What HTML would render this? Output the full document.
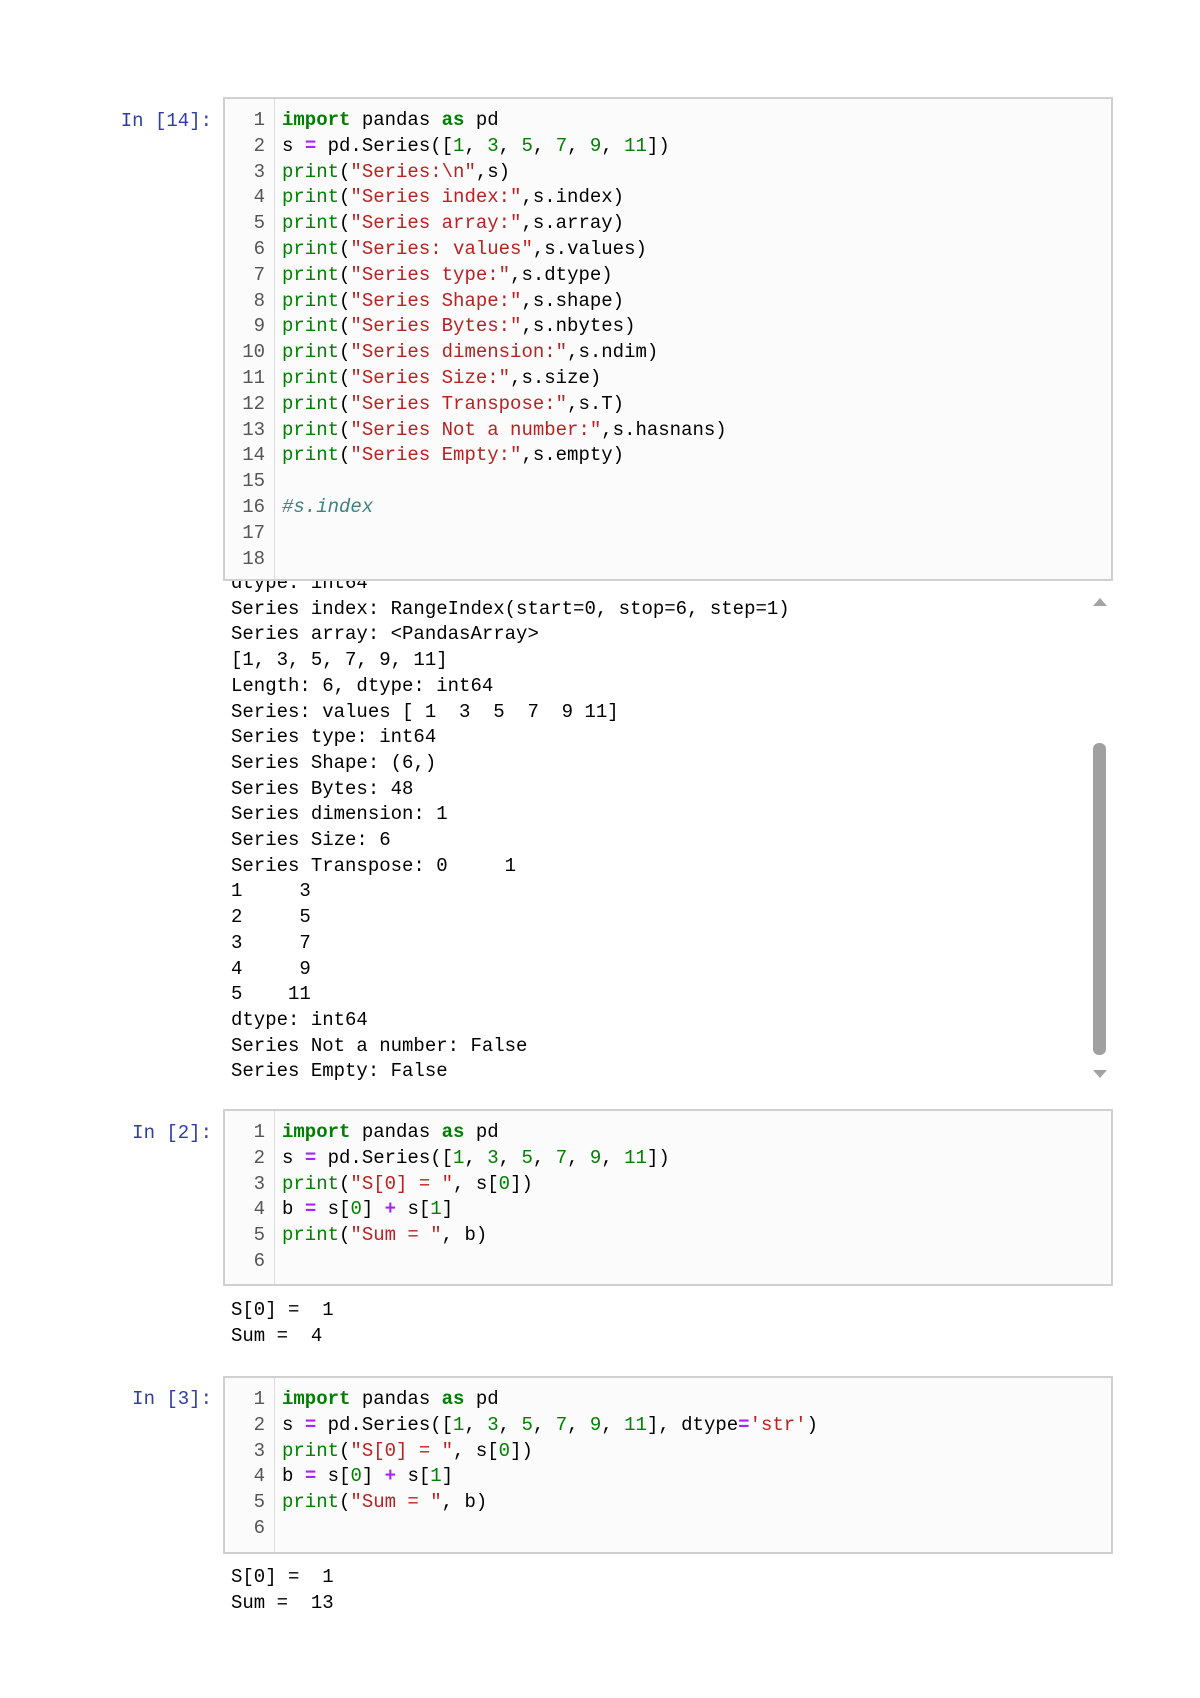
<!DOCTYPE html>
<html><head><meta charset="utf-8"><style>
body{margin:0;background:#fff;width:1200px;height:1698px;position:relative;overflow:hidden;font-family:"Liberation Mono",monospace;font-size:19px;}
.p{position:absolute;right:988px;color:#303F9F;line-height:26px;white-space:pre;}
.box{position:absolute;left:223px;width:890px;border:2px solid #d0d0d0;background:#fbfbfb;box-sizing:border-box;}
.gut{position:absolute;left:0;top:0;bottom:0;width:49px;border-right:1px solid #ddd;}
.ln{position:absolute;left:0;width:40px;text-align:right;color:#555;line-height:25.8px;white-space:pre;}
.code{position:absolute;left:57px;line-height:25.8px;white-space:pre;color:#000;}
.out{position:absolute;left:231px;line-height:25.7px;white-space:pre;color:#000;}
.k{color:#008000;font-weight:bold}.b{color:#008000}.s{color:#BA2121}.n{color:#008000}.o{color:#AA22FF;font-weight:bold}.c{color:#408080;font-style:italic}
</style></head><body>

<div class="p" style="top:108px">In [14]:</div>
<div class="box" style="top:97px;height:484px">
<div class="gut"></div>
<div class="ln" style="top:9px">1
2
3
4
5
6
7
8
9
10
11
12
13
14
15
16
17
18</div>
<div class="code" style="top:9px"><span class="k">import</span> pandas <span class="k">as</span> pd
s <span class="o">=</span> pd.Series([<span class="n">1</span>, <span class="n">3</span>, <span class="n">5</span>, <span class="n">7</span>, <span class="n">9</span>, <span class="n">11</span>])
<span class="b">print</span>(<span class="s">"Series:\n"</span>,s)
<span class="b">print</span>(<span class="s">"Series index:"</span>,s.index)
<span class="b">print</span>(<span class="s">"Series array:"</span>,s.array)
<span class="b">print</span>(<span class="s">"Series: values"</span>,s.values)
<span class="b">print</span>(<span class="s">"Series type:"</span>,s.dtype)
<span class="b">print</span>(<span class="s">"Series Shape:"</span>,s.shape)
<span class="b">print</span>(<span class="s">"Series Bytes:"</span>,s.nbytes)
<span class="b">print</span>(<span class="s">"Series dimension:"</span>,s.ndim)
<span class="b">print</span>(<span class="s">"Series Size:"</span>,s.size)
<span class="b">print</span>(<span class="s">"Series Transpose:"</span>,s.T)
<span class="b">print</span>(<span class="s">"Series Not a number:"</span>,s.hasnans)
<span class="b">print</span>(<span class="s">"Series Empty:"</span>,s.empty)

<span class="c">#s.index</span>

</div>
</div>

<div style="position:absolute;left:223px;top:581px;width:890px;height:512px;overflow:hidden">
<div class="out" style="left:8px;top:-10px">dtype: int64
Series index: RangeIndex(start=0, stop=6, step=1)
Series array: &lt;PandasArray&gt;
[1, 3, 5, 7, 9, 11]
Length: 6, dtype: int64
Series: values [ 1  3  5  7  9 11]
Series type: int64
Series Shape: (6,)
Series Bytes: 48
Series dimension: 1
Series Size: 6
Series Transpose: 0     1
1     3
2     5
3     7
4     9
5    11
dtype: int64
Series Not a number: False
Series Empty: False</div>
</div>
<div style="position:absolute;left:1093px;top:598px;width:0;height:0;border-left:7px solid transparent;border-right:7px solid transparent;border-bottom:8px solid #a3a3a3"></div>
<div style="position:absolute;left:1093px;top:743px;width:13px;height:312px;background:#a0a0a0;border-radius:6px"></div>
<div style="position:absolute;left:1093px;top:1070px;width:0;height:0;border-left:7px solid transparent;border-right:7px solid transparent;border-top:8px solid #a3a3a3"></div>

<div class="p" style="top:1120px">In [2]:</div>
<div class="box" style="top:1109px;height:177px">
<div class="gut"></div>
<div class="ln" style="top:9px">1
2
3
4
5
6</div>
<div class="code" style="top:9px"><span class="k">import</span> pandas <span class="k">as</span> pd
s <span class="o">=</span> pd.Series([<span class="n">1</span>, <span class="n">3</span>, <span class="n">5</span>, <span class="n">7</span>, <span class="n">9</span>, <span class="n">11</span>])
<span class="b">print</span>(<span class="s">"S[0] = "</span>, s[<span class="n">0</span>])
b <span class="o">=</span> s[<span class="n">0</span>] <span class="o">+</span> s[<span class="n">1</span>]
<span class="b">print</span>(<span class="s">"Sum = "</span>, b)
</div>
</div>
<div class="out" style="top:1298px">S[0] =  1
Sum =  4</div>

<div class="p" style="top:1386px">In [3]:</div>
<div class="box" style="top:1376px;height:178px">
<div class="gut"></div>
<div class="ln" style="top:9px">1
2
3
4
5
6</div>
<div class="code" style="top:9px"><span class="k">import</span> pandas <span class="k">as</span> pd
s <span class="o">=</span> pd.Series([<span class="n">1</span>, <span class="n">3</span>, <span class="n">5</span>, <span class="n">7</span>, <span class="n">9</span>, <span class="n">11</span>], dtype<span class="o">=</span><span class="s">'str'</span>)
<span class="b">print</span>(<span class="s">"S[0] = "</span>, s[<span class="n">0</span>])
b <span class="o">=</span> s[<span class="n">0</span>] <span class="o">+</span> s[<span class="n">1</span>]
<span class="b">print</span>(<span class="s">"Sum = "</span>, b)
</div>
</div>
<div class="out" style="top:1565px">S[0] =  1
Sum =  13</div>

</body></html>
